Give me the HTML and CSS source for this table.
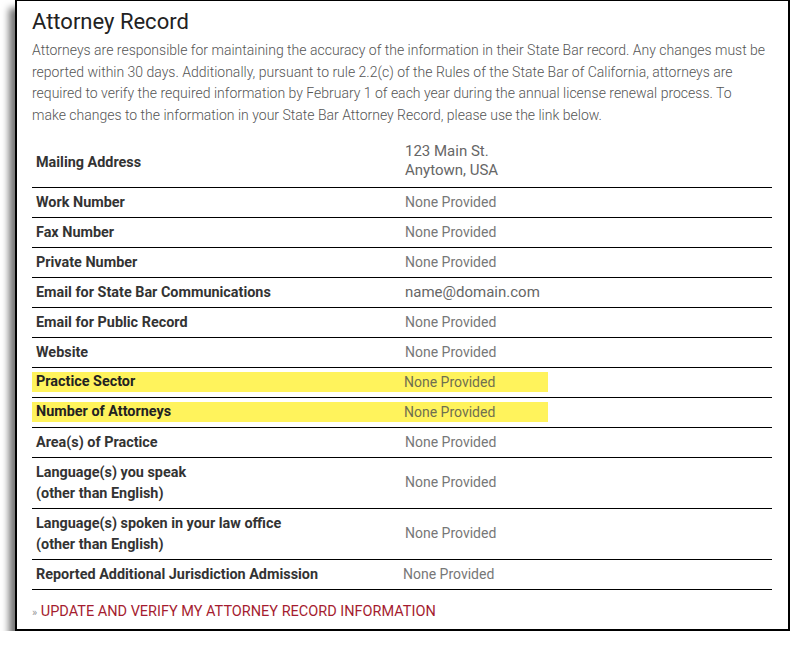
FILE: index.html
```html
<!DOCTYPE html>
<html>
<head>
<meta charset="utf-8">
<link rel="stylesheet" href="styles.css">
</head>
<body>
<div class="card">
  <h1 class="title">Attorney Record</h1>
  <p class="intro">Attorneys are responsible for maintaining the accuracy of the information in their State Bar record. Any changes must be reported within 30 days. Additionally, pursuant to rule 2.2(c) of the Rules of the State Bar of California, attorneys are required to verify the required information by February 1 of each year during the annual license renewal process. To make changes to the information in your State Bar Attorney Record, please use the link below.</p>
  <table class="record">
    <tr class="first"><th><div class="c">Mailing Address</div></th><td><div class="c addr">123 Main St.<br>Anytown, USA</div></td></tr>
    <tr><th><div class="c">Work Number</div></th><td><div class="c">None Provided</div></td></tr>
    <tr><th><div class="c">Fax Number</div></th><td><div class="c">None Provided</div></td></tr>
    <tr><th><div class="c">Private Number</div></th><td><div class="c">None Provided</div></td></tr>
    <tr><th><div class="c">Email for State Bar Communications</div></th><td><div class="c email">name@domain.com</div></td></tr>
    <tr><th><div class="c">Email for Public Record</div></th><td><div class="c">None Provided</div></td></tr>
    <tr><th><div class="c">Website</div></th><td><div class="c">None Provided</div></td></tr>
    <tr class="hl"><th><div class="c">Practice Sector</div></th><td><div class="c">None Provided</div></td></tr>
    <tr class="hl"><th><div class="c">Number of Attorneys</div></th><td><div class="c">None Provided</div></td></tr>
    <tr><th><div class="c">Area(s) of Practice</div></th><td><div class="c">None Provided</div></td></tr>
    <tr><th><div class="c">Language(s) you speak<br>(other than English)</div></th><td><div class="c">None Provided</div></td></tr>
    <tr><th><div class="c">Language(s) spoken in your law office<br>(other than English)</div></th><td><div class="c">None Provided</div></td></tr>
    <tr><th><div class="c">Reported Additional Jurisdiction Admission</div></th><td><div class="c shift">None Provided</div></td></tr>
  </table>
  <p class="link"><span class="raquo">»</span> <a href="#">UPDATE AND VERIFY MY ATTORNEY RECORD INFORMATION</a></p>
</div>
</body>
</html>
```

FILE: styles.css
```css
html, body {
  margin: 0;
  padding: 0;
  background: #fff;
}
body {
  font-family: Roboto, "Liberation Sans", sans-serif;
  color: #333;
}
.card {
  box-sizing: border-box;
  width: 775px;
  height: 631px;
  margin-left: 15px;
  border: 2px solid #000;
  border-top-width: 1px;
  padding: 0 16px 0 15px;
  background: #fff;
  box-shadow: -6px 8px 7px rgba(0, 0, 0, 0.55);
}
.title {
  margin: 0;
  padding-top: 7px;
  font-size: 22px;
  line-height: 28px;
  font-weight: 400;
  color: #222;
}
.intro {
  margin: 4px 0 0;
  padding-right: 3.5px;
  font-size: 14px;
  line-height: 21.7px;
  font-weight: 300;
  color: #555;
}
.record {
  width: 100%;
  margin-top: 11px;
  border-collapse: collapse;
  table-layout: fixed;
}
.record th, .record td {
  width: 50%;
  padding: 4px 0;
  border-bottom: 1px solid #000;
  text-align: left;
  vertical-align: middle;
  font-size: 14px;
  line-height: 21px;
}
.record th {
  font-size: 14.4px;
  font-weight: 700;
  color: #333;
}
.record td {
  color: #777;
}
.c {
  padding-left: 4px;
}
.record td .c {
  padding-left: 3px;
}
.addr {
  font-size: 15px;
  line-height: 19px;
  color: #666;
  padding-bottom: 3px;
}
.email {
  font-size: 15px;
  color: #666;
}
.record td .shift {
  padding-left: 1px;
}
.hl th .c {
  background: #fff35c;
  height: 20px;
  line-height: 20px;
  color: #222;
}
.record .hl td .c {
  background: #fff35c;
  width: 144px;
  height: 20px;
  line-height: 20px;
  padding-left: 2px;
  color: #6f6f50;
}
.hl th, .hl td {
  padding: 4px 0 5px;
}
.link {
  margin: 12px 0 0;
  font-size: 14.5px;
  line-height: 20px;
}
.raquo {
  color: #999;
  font-size: 11px;
}
.link a {
  color: #a51c30;
  text-decoration: none;
}
```
